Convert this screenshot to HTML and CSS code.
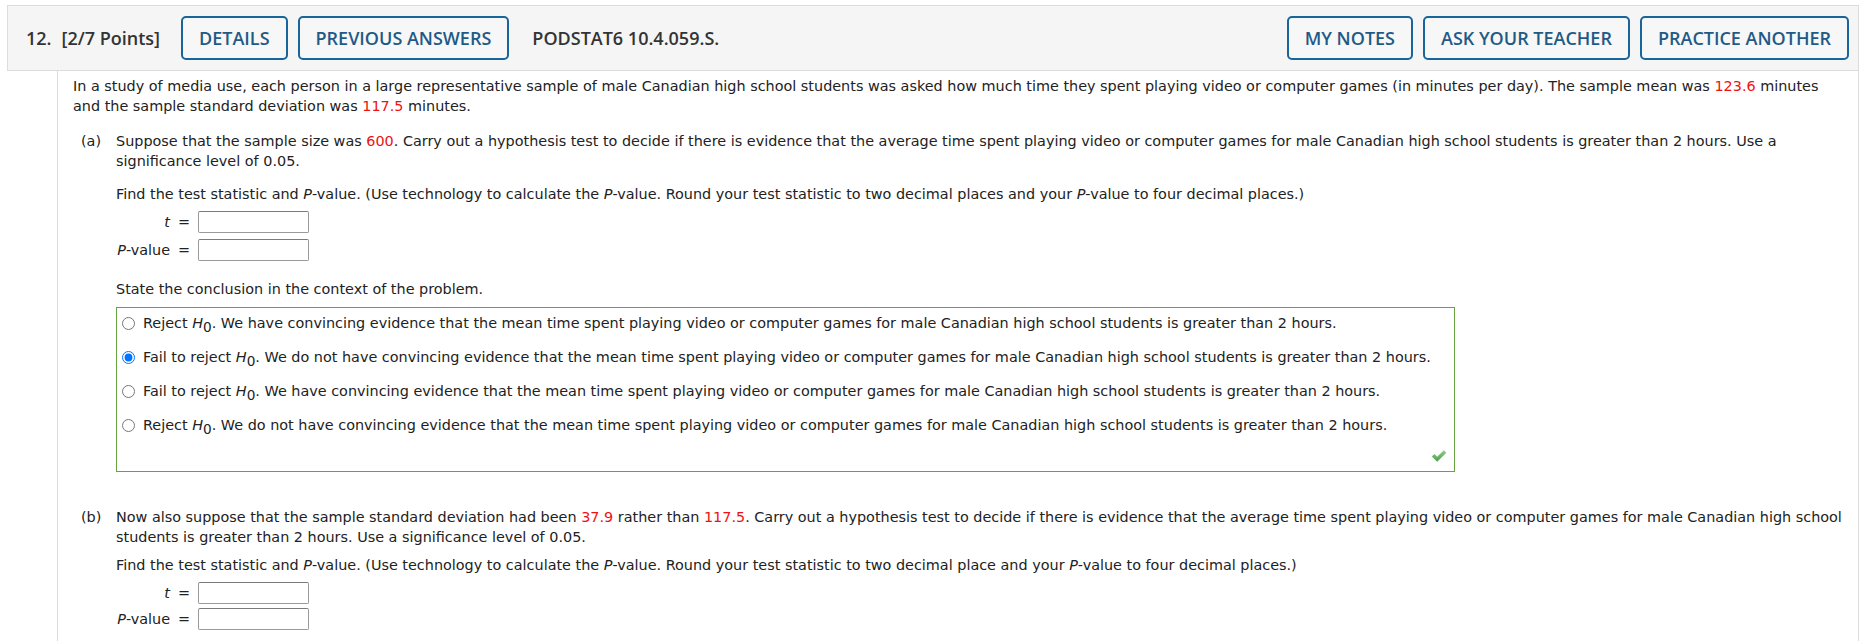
FILE: index.html
```html
<!DOCTYPE html>
<html lang="en">
<head>
<meta charset="utf-8">
<title>Question 12</title>
<link rel="stylesheet" href="styles.css">
</head>
<body>
<div class="page">
  <div class="qhead">
    <span class="qnum">12.</span>
    <span class="qpts">[2/7 Points]</span>
    <div class="btns">
      <button class="btn">DETAILS</button>
      <button class="btn">PREVIOUS ANSWERS</button>
    </div>
    <span class="qcode">PODSTAT6 10.4.059.S.</span>
    <div class="spacer"></div>
    <div class="btns btns-right">
      <button class="btn">MY NOTES</button>
      <button class="btn">ASK YOUR TEACHER</button>
      <button class="btn">PRACTICE ANOTHER</button>
    </div>
  </div>

  <div class="qbody">
    <p class="intro">In a study of media use, each person in a large representative sample of male Canadian high school students was asked how much time they spent playing video or computer games (in minutes per day). The sample mean was <span class="red">123.6</span> minutes and the sample standard deviation was <span class="red">117.5</span> minutes.</p>

    <div class="part part-a">
      <span class="plabel">(a)</span>
      <div class="pcontent">
        <p class="ptext">Suppose that the sample size was <span class="red">600</span>. Carry out a hypothesis test to decide if there is evidence that the average time spent playing video or computer games for male Canadian high school students is greater than 2 hours. Use a significance level of 0.05.</p>
        <p class="find find-a">Find the test statistic and <i>P</i>-value. (Use technology to calculate the <i>P</i>-value. Round your test statistic to two decimal places and your <i>P</i>-value to four decimal places.)</p>
        <div class="answers">
          <div class="arow"><span class="alabel"><i>t</i></span><span class="aeq">=</span><input class="ainput" type="text"></div>
          <div class="arow"><span class="alabel"><i>P</i>-value</span><span class="aeq">=</span><input class="ainput" type="text"></div>
        </div>
        <p class="state">State the conclusion in the context of the problem.</p>
        <div class="choices">
          <label class="choice"><input class="radio" type="radio" name="concl"><span>Reject <i>H</i><sub>0</sub>. We have convincing evidence that the mean time spent playing video or computer games for male Canadian high school students is greater than 2 hours.</span></label>
          <label class="choice"><input class="radio" type="radio" name="concl" checked><span>Fail to reject <i>H</i><sub>0</sub>. We do not have convincing evidence that the mean time spent playing video or computer games for male Canadian high school students is greater than 2 hours.</span></label>
          <label class="choice"><input class="radio" type="radio" name="concl"><span>Fail to reject <i>H</i><sub>0</sub>. We have convincing evidence that the mean time spent playing video or computer games for male Canadian high school students is greater than 2 hours.</span></label>
          <label class="choice"><input class="radio" type="radio" name="concl"><span>Reject <i>H</i><sub>0</sub>. We do not have convincing evidence that the mean time spent playing video or computer games for male Canadian high school students is greater than 2 hours.</span></label>
          <div class="checkrow">
            <svg class="check" width="16" height="14" viewBox="0 0 16 14" aria-hidden="true">
              <defs>
                <linearGradient id="cg" x1="0" y1="0" x2="0" y2="1">
                  <stop offset="0" stop-color="#8fd18a"/>
                  <stop offset="1" stop-color="#4c9c4a"/>
                </linearGradient>
              </defs>
              <path d="M0.8 7.6 L3.4 5 L6.2 7.8 L12.8 1.2 L15.3 3.7 L6.2 12.8 Z" fill="url(#cg)"/>
            </svg>
          </div>
        </div>
      </div>
    </div>

    <div class="part part-b">
      <span class="plabel">(b)</span>
      <div class="pcontent">
        <p class="ptext">Now also suppose that the sample standard deviation had been <span class="red">37.9</span> rather than <span class="red">117.5</span>. Carry out a hypothesis test to decide if there is evidence that the average time spent playing video or computer games for male Canadian high school students is greater than 2 hours. Use a significance level of 0.05.</p>
        <p class="find find-b">Find the test statistic and <i>P</i>-value. (Use technology to calculate the <i>P</i>-value. Round your test statistic to two decimal place and your <i>P</i>-value to four decimal places.)</p>
        <div class="answers answers-tight">
          <div class="arow"><span class="alabel"><i>t</i></span><span class="aeq">=</span><input class="ainput" type="text"></div>
          <div class="arow"><span class="alabel"><i>P</i>-value</span><span class="aeq">=</span><input class="ainput" type="text"></div>
        </div>
      </div>
    </div>
  </div>
</div>
</body>
</html>
```

FILE: styles.css
```css
html, body {
  margin: 0;
  padding: 0;
  background: #ffffff;
}

body {
  font-family: "DejaVu Sans", Verdana, sans-serif;
  font-size: 14.4px;
  line-height: 20px;
  color: #222222;
}

.page {
  padding: 5px 9px 0 7px;
}

/* ---------- header ---------- */
.qhead {
  display: flex;
  align-items: center;
  height: 66px;
  box-sizing: border-box;
  padding: 0 9px 0 18px;
  background: #f5f5f5;
  border: 1px solid #dcdcdc;
  font-family: "Open Sans", "DejaVu Sans", sans-serif;
  font-weight: 600;
  font-size: 18px;
  color: #333333;
}

.qnum {
  margin-right: 10px;
}

.qpts {
  margin-right: 21px;
}

.btns {
  display: flex;
  gap: 10px;
}

.btn {
  height: 44px;
  box-sizing: border-box;
  padding: 0 16px;
  border: 2px solid #17659b;
  border-radius: 5px;
  background: #f7f7f7;
  font-family: "Open Sans", "DejaVu Sans", sans-serif;
  font-weight: 600;
  font-size: 18px;
  color: #1f5a87;
}

.qcode {
  margin-left: 23px;
}

.spacer {
  flex: 1;
}

/* ---------- body ---------- */
.qbody {
  margin-left: 50px;
  border-left: 1px solid #dcdcdc;
  border-right: 1px solid #dcdcdc;
  padding: 5px 15px 0 15px;
  min-height: 570px;
}

p {
  margin: 0;
}

.red {
  color: #ee1111;
}

.part {
  display: flex;
  padding-left: 8px;
}

.part-a {
  margin-top: 15px;
}

.part-b {
  margin-top: 35px;
}

.plabel {
  flex: 0 0 35px;
}

.pcontent {
  flex: 1;
}

.find-a {
  margin-top: 13px;
}

.find-b {
  margin-top: 8px;
}

.answers {
  margin-top: 7px;
  display: flex;
  flex-direction: column;
  gap: 6px;
}

.answers-tight {
  gap: 4px;
}

.arow {
  display: flex;
  align-items: center;
}

.alabel {
  width: 54px;
  text-align: right;
  white-space: nowrap;
}

.aeq {
  width: 28px;
  text-align: center;
}

.ainput {
  width: 111px;
  height: 22px;
  box-sizing: border-box;
  margin: 0;
  border: 1px solid #9a9a9a;
  border-top-color: #7a7a7a;
  border-radius: 2px;
  background: #ffffff;
}

.state {
  margin-top: 18px;
}

.choices {
  margin-top: 8px;
  width: 1339px;
  box-sizing: border-box;
  border: 1px solid #67a43f;
  padding: 5px 7px 8px 0;
}

.choice {
  display: flex;
  align-items: center;
  margin-bottom: 14px;
  white-space: nowrap;
}

.radio {
  margin: 0 8px 0 5px;
  width: 13px;
  height: 13px;
}

sub {
  font-size: 0.95em;
  vertical-align: -4px;
  line-height: 0;
}

.checkrow {
  display: flex;
  justify-content: flex-end;
  height: 14px;
}

.check {
  display: block;
}
```
